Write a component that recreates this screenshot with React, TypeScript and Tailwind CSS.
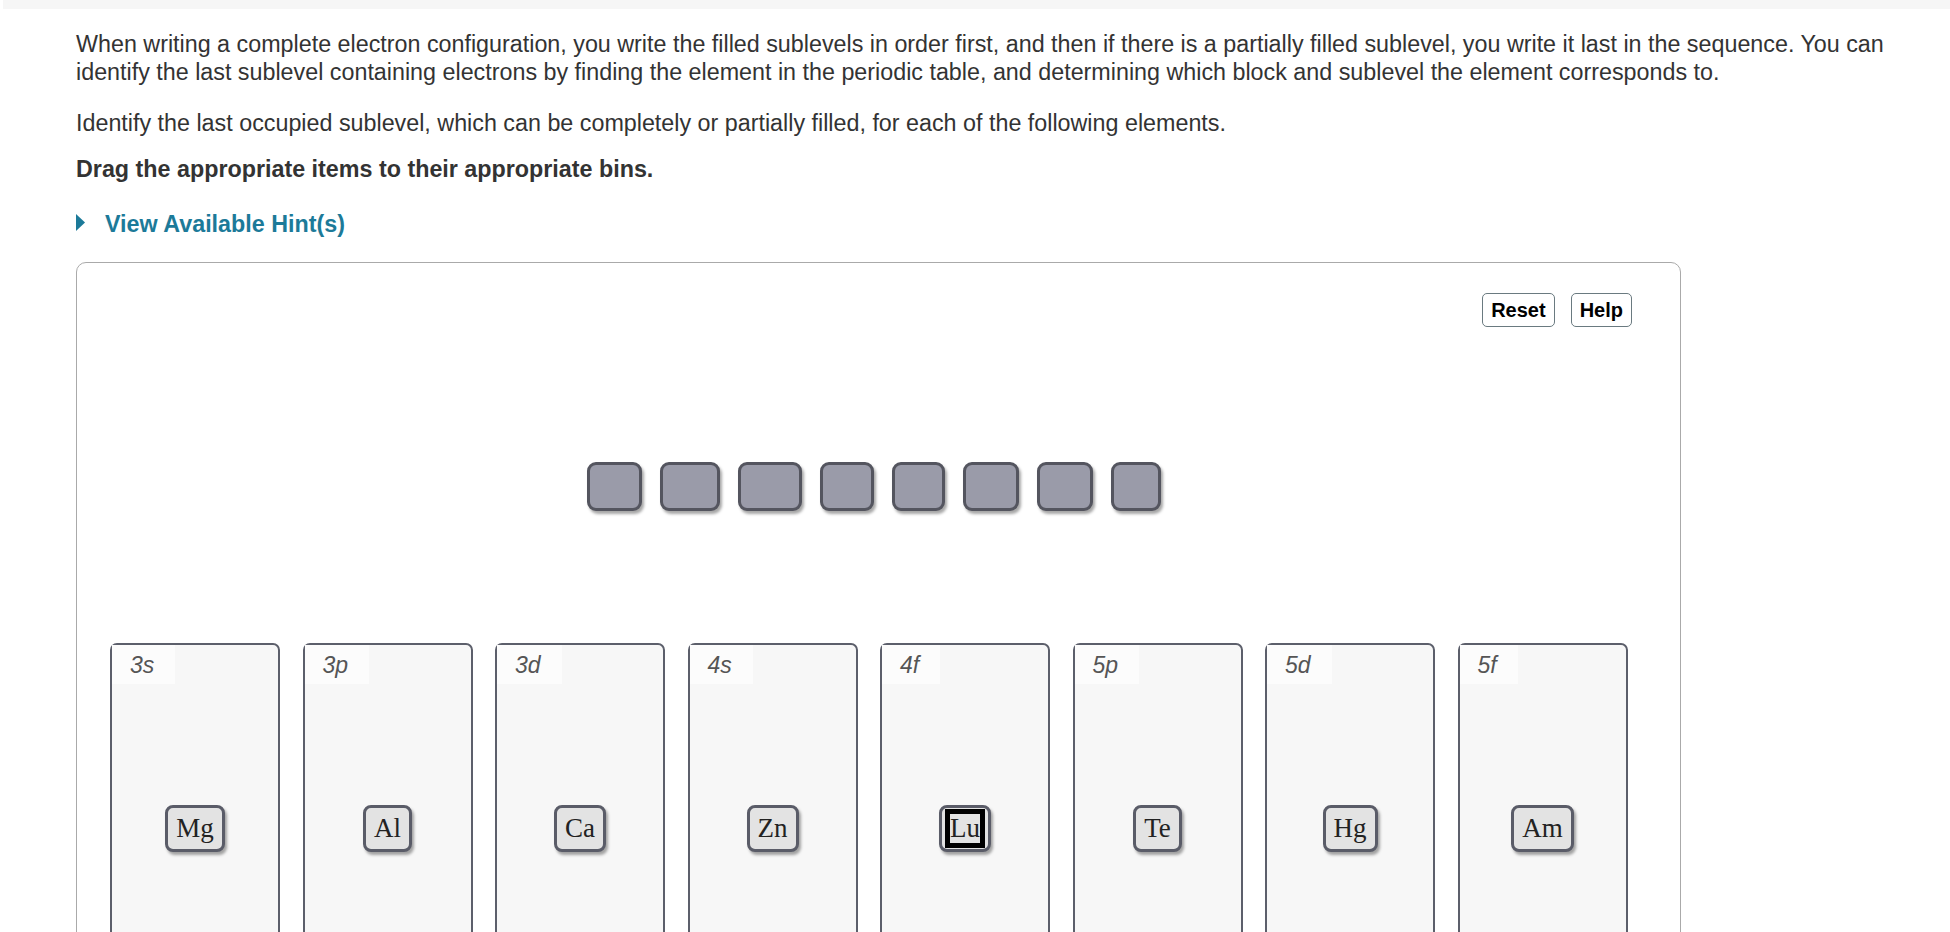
import React from "react";

const placeholderWidths = [55, 60, 64, 54, 53, 56, 56, 50];

const bins = [
  { label: "3s", element: "Mg" },
  { label: "3p", element: "Al" },
  { label: "3d", element: "Ca" },
  { label: "4s", element: "Zn" },
  { label: "4f", element: "Lu", focused: true },
  { label: "5p", element: "Te" },
  { label: "5d", element: "Hg" },
  { label: "5f", element: "Am" },
];

function Chip({ text, focused }: { text: string; focused?: boolean }) {
  return (
    <div className="self-center rounded-[8px] border-[3px] border-[#5a5c68] bg-[#e3e3e3] px-[8px] py-[6px] font-['Liberation_Serif',serif] text-[27px] leading-[29px] text-[#222] shadow-[2px_3px_3px_rgba(0,0,0,0.35)]">
      <span className={focused ? "inline-block shadow-[0_0_0_5px_#000]" : "inline-block"}>{text}</span>
    </div>
  );
}

export default function App() {
  return (
    <div className="min-h-screen bg-white font-['Liberation_Sans',Arial,sans-serif] text-[#333]">
      <div className="ml-[3px] h-[9px] bg-[#f6f6f6]" />

      <div className="pl-[76px] pr-[24px] text-[23.3px] leading-[28px]">
        <p className="mt-[21px]">
          When writing a complete electron configuration, you write the filled sublevels in order first, and then if there is a
          partially filled sublevel, you write it last in the sequence. You can identify the last sublevel containing electrons by
          finding the element in the periodic table, and determining which block and sublevel the element corresponds to.
        </p>
        <p className="mt-[23px]">
          Identify the last occupied sublevel, which can be completely or partially filled, for each of the following elements.
        </p>
        <p className="mt-[18px] font-bold">Drag the appropriate items to their appropriate bins.</p>

        <div className="mt-[27px] flex items-center">
          <svg width="9" height="17" viewBox="0 0 9 17" className="mr-[20px] mt-[-3px]">
            <polygon points="0,0 9,8.5 0,17" fill="#1c7a99" />
          </svg>
          <span className="font-bold text-[#1c7a99]">View Available Hint(s)</span>
        </div>

        {/* Drag and drop area */}
        <div className="mt-[24px] flex w-[1605px] flex-col rounded-[10px] border border-[#aaaaaa]">
          <div className="flex justify-end gap-[16px] pr-[48px] pt-[30px]">
            <button className="rounded-[5px] border border-[#6a7a80] bg-white px-[8px] py-[4px] text-[20px] font-bold leading-[24px] text-black">
              Reset
            </button>
            <button className="rounded-[5px] border border-[#6a7a80] bg-white px-[8px] py-[4px] text-[20px] font-bold leading-[24px] text-black">
              Help
            </button>
          </div>

          <div className="mt-[135px] flex justify-center gap-[18px] pr-[9px]">
            {placeholderWidths.map((w, i) => (
              <div
                key={i}
                className="h-[49px] rounded-[9px] border-[3px] border-[#54555f] bg-[#9a9ba9] shadow-[2px_3px_3px_rgba(0,0,0,0.35)]"
                style={{ width: w }}
              />
            ))}
          </div>

          <div className="mt-[132px] flex gap-[22.5px] pl-[33px]">
            {bins.map((b) => (
              <div
                key={b.label}
                className="flex h-[379px] w-[170px] flex-col rounded-[7px] border-2 border-[#5c5f6b] bg-[#f7f7f7]"
              >
                <div className="h-[39px] self-start bg-[#fcfcfc] pl-[18px] pr-[21px] pt-[2px] text-[23px] italic leading-[37px] text-[#555]">
                  {b.label}
                </div>
                <div className="mt-[121px] flex justify-center">
                  <Chip text={b.element} focused={b.focused} />
                </div>
              </div>
            ))}
          </div>
          <div className="h-[30px]" />
        </div>
      </div>
    </div>
  );
}
